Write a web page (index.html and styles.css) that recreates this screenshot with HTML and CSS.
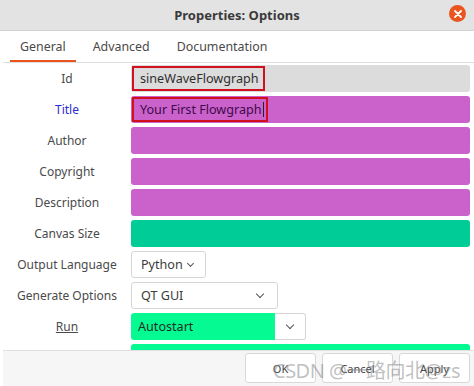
FILE: index.html
```html
<!DOCTYPE html>
<html lang="en">
<head>
    <meta charset="UTF-8">
    <title>Properties: Options</title>
    <link rel="stylesheet" href="styles.css">
</head>
<body>
    <div class="dialog">
        <div class="titlebar">
            <span class="title">Properties: Options</span>
            <span class="close">
                <svg width="10" height="10" viewBox="0 0 10 10"><path d="M2 2 L8 8 M8 2 L2 8" stroke="#fff" stroke-width="1.8" stroke-linecap="round"/></svg>
            </span>
        </div>

        <div class="tabs">
            <div class="tab active">General</div>
            <div class="tab">Advanced</div>
            <div class="tab">Documentation</div>
        </div>

        <div class="form">
            <div class="row">
                <label>Id</label>
                <div class="field grey"><span class="mark">sineWaveFlowgraph</span></div>
            </div>
            <div class="row">
                <label class="blue">Title</label>
                <div class="field magenta"><span class="mark dark">Your First Flowgraph<span class="cursor"></span></span></div>
            </div>
            <div class="row">
                <label>Author</label>
                <div class="field magenta"></div>
            </div>
            <div class="row">
                <label>Copyright</label>
                <div class="field magenta"></div>
            </div>
            <div class="row">
                <label>Description</label>
                <div class="field magenta"></div>
            </div>
            <div class="row">
                <label>Canvas Size</label>
                <div class="field teal"></div>
            </div>
            <div class="row">
                <label>Output Language</label>
                <div class="combo small">Python <span class="chev small-chev"></span></div>
            </div>
            <div class="row">
                <label>Generate Options</label>
                <div class="combo medium"><span>QT GUI</span><span class="chev"></span></div>
            </div>
            <div class="row">
                <label class="underline">Run</label>
                <div class="run">
                    <div class="run-text">Autostart</div>
                    <div class="run-btn"><span class="chev"></span></div>
                </div>
            </div>
            <div class="row">
                <label></label>
                <div class="field green"></div>
            </div>
        </div>

        <div class="footer">
            <div class="btn">OK</div>
            <div class="btn">Cancel</div>
            <div class="btn">Apply</div>
            <div class="watermark">CSDN @一路向北@zs</div>
        </div>
    </div>
</body>
</html>
```

FILE: styles.css
```css
body {
    margin: 0;
    font-family: "Noto Sans", sans-serif;
    font-size: 12px;
    color: #3c3c3c;
    background: #fff;
}

.dialog {
    width: 474px;
    height: 386px;
    display: flex;
    flex-direction: column;
    overflow: hidden;
}

.titlebar {
    height: 30px;
    flex: none;
    background: #e3e3e3;
    border-bottom: 1px solid #d2d2d2;
    display: flex;
    align-items: center;
    justify-content: center;
    position: relative;
}

.title {
    font-weight: bold;
    font-size: 13px;
    color: #3a3a3a;
}

.close {
    position: absolute;
    right: 8px;
    top: 5px;
    width: 17px;
    height: 17px;
    border-radius: 50%;
    background: #e9541f;
    display: flex;
    align-items: center;
    justify-content: center;
}

.tabs {
    height: 31px;
    flex: none;
    display: flex;
    gap: 7px;
    border-bottom: 1px solid #dedede;
    margin-left: 3px;
    padding-left: 7px;
}

.tab {
    padding: 0 10px;
    display: flex;
    align-items: center;
    font-size: 12.4px;
    color: #4a4a4a;
    border-bottom: 2px solid transparent;
    padding-top: 2px;
}

.tab.active {
    border-bottom-color: #e9541f;
}

.form {
    flex: 1;
    overflow: hidden;
    margin-left: 3px;
    padding: 2px 4px 0 0;
    display: flex;
    flex-direction: column;
    gap: 4px;
}

.row {
    display: flex;
    align-items: center;
    height: 27px;
    flex: none;
}

.row label {
    width: 128px;
    flex: none;
    text-align: center;
    color: #4a4a4a;
}

.row label.blue {
    color: #2b2bd0;
}

.row label.underline {
    text-decoration: underline;
}

.field {
    flex: 1;
    height: 27px;
    border-radius: 3px;
    display: flex;
    align-items: center;
    padding-left: 1px;
}

.grey {
    background: #dcdcdc;
}

.magenta {
    background: #cb62cb;
}

.teal {
    background: #00cc98;
}

.green {
    background: #05fb91;
}

.mark {
    border: 2px solid #d20f1c;
    height: 21px;
    display: flex;
    align-items: center;
    padding: 0 4px 0 6px;
    color: #2e2e2e;
    font-size: 12.6px;
}

.mark.dark {
    color: #3b0a4a;
    padding-right: 2px;
}

.cursor {
    display: inline-block;
    width: 1px;
    height: 15px;
    background: #222;
    margin-left: 1px;
}

.combo {
    height: 25px;
    border: 1px solid #d6d6d6;
    border-radius: 3px;
    display: flex;
    align-items: center;
    padding: 0 9px;
    background: #fff;
    font-size: 12.6px;
}

.combo.small {
    width: 55px;
    gap: 5px;
}

.combo.medium {
    width: 122px;
    justify-content: space-between;
    padding-right: 14px;
}

.chev {
    width: 5px;
    height: 5px;
    border-right: 1.3px solid #555;
    border-bottom: 1.3px solid #555;
    transform: rotate(45deg);
    margin-top: -3px;
}

.small-chev {
    width: 4px;
    height: 4px;
}

.run {
    display: flex;
    height: 27px;
    width: 175px;
}

.run-text {
    width: 137px;
    background: #05fb91;
    border-radius: 3px 0 0 3px;
    display: flex;
    align-items: center;
    padding-left: 7px;
    color: #1f2e24;
    font-size: 12.6px;
}

.run-btn {
    flex: 1;
    border: 1px solid #d6d6d6;
    border-left: none;
    border-radius: 0 3px 3px 0;
    display: flex;
    align-items: center;
    justify-content: center;
}

.footer {
    height: 33px;
    flex: none;
    background: #f6f6f6;
    border-top: 1px solid #e0e0e0;
    margin-left: 3px;
    display: flex;
    justify-content: flex-end;
    align-items: flex-start;
    gap: 6px;
    padding: 2px 4px 0 0;
    position: relative;
}

.btn {
    width: 69px;
    height: 28px;
    background: #fff;
    border: 1px solid #d8d8d8;
    border-radius: 3px;
    display: flex;
    align-items: center;
    justify-content: center;
    font-size: 11px;
    color: #444;
}

.watermark {
    position: absolute;
    left: 270px;
    top: 4px;
    font-size: 20px;
    color: rgba(130, 130, 130, 0.5);
    font-family: "Noto Sans", "Noto Sans CJK SC", sans-serif;
    white-space: nowrap;
    letter-spacing: -0.5px;
}
```
